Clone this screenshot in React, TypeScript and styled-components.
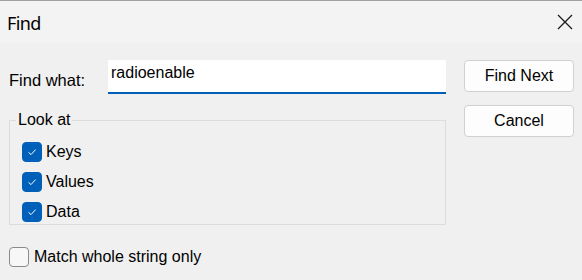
import React, { useState } from 'react';
import styled, { createGlobalStyle } from 'styled-components';

// --------------------------------------------------------------- //
//                       Styled Components                         //
// --------------------------------------------------------------- //

const GlobalStyle = createGlobalStyle`
  html, body {
    margin: 0;
    padding: 0;
    background: #f0f0f0;
  }
  body {
    font-family: "Liberation Sans", Arial, sans-serif;
    color: #000;
  }
`;

const Window = styled.div`
  width: 582px;
  height: 280px;
  background: #f0f0f0;
  overflow: hidden;
`;

const TitleBar = styled.div`
  height: 42px;
  border-top: 1px solid #a0a0a0;
  background: #f3f3f3;
  display: flex;
  align-items: center;
  justify-content: space-between;
  padding-left: 7px;
  padding-right: 9px;
`;

const Title = styled.span`
  font-family: "Noto Sans", "Open Sans", sans-serif;
  font-size: 18px;
  letter-spacing: -0.6px;
  margin-top: 1px;
`;

const CloseButton = styled.button`
  width: 16px;
  height: 16px;
  padding: 0;
  border: none;
  background: none;
  display: flex;
  align-items: center;
  justify-content: center;
  cursor: pointer;
`;

const Body = styled.div`
  display: flex;
  padding: 17px 8px 0 9px;
`;

const LeftColumn = styled.div`
  width: 437px;
  display: flex;
  flex-direction: column;
`;

const RightColumn = styled.div`
  margin-left: 18px;
  width: 111px;
  display: flex;
  flex-direction: column;
  gap: 13px;
`;

const FindRow = styled.div`
  display: flex;
  align-items: center;
`;

const Label = styled.label`
  width: 99px;
  font-size: 16.5px;
  padding-top: 7px;
`;

const TextInput = styled.input`
  box-sizing: border-box;
  width: 338px;
  height: 34px;
  border: none;
  border-bottom: 2px solid #005fb8;
  background: #fff;
  font-family: inherit;
  font-size: 16px;
  color: #000;
  padding: 0 3px 7px;
  outline: none;
`;

const Button = styled.button`
  box-sizing: border-box;
  height: 32px;
  border: 1px solid #d1d1d1;
  border-radius: 4px;
  background: #fdfdfd;
  font-family: inherit;
  font-size: 16px;
  color: #000;
  cursor: pointer;
`;

const GroupBox = styled.fieldset`
  margin: 18px 0 0;
  height: 113px;
  box-sizing: border-box;
  border: 1px solid #dcdcdc;
  padding: 9px 0 0 12px;
  display: flex;
  flex-direction: column;
`;

const Legend = styled.legend`
  font-size: 16px;
  padding: 0 2px;
  margin-left: -6px;
  line-height: 16px;
`;

interface CheckRowProps {
  indent?: boolean
}

const CheckRow = styled.label<CheckRowProps>`
  display: flex;
  align-items: center;
  height: 30px;
  font-size: 16px;
  gap: ${(props) => (props.indent ? '4px' : '5px')};
  cursor: pointer;
`;

interface BoxProps {
  checked: boolean
}

const Box = styled.span<BoxProps>`
  box-sizing: border-box;
  width: 20px;
  height: 20px;
  border-radius: 4px;
  display: flex;
  align-items: center;
  justify-content: center;
  background: ${(props) => (props.checked ? '#005fb8' : '#f7f7f7')};
  border: 1px solid ${(props) => (props.checked ? '#005fb8' : '#8a8a8a')};
`;

const MatchRow = styled.div`
  margin-top: 17px;
`;

// --------------------------------------------------------------- //
//                         Sub Components                          //
// --------------------------------------------------------------- //

interface CheckProps {
  label: string,
  checked: boolean,
  onToggle: () => void
}

const Check = ({ label, checked, onToggle }: CheckProps) => (
  <CheckRow indent onClick={onToggle}>
    <Box checked={checked}>
      {checked && (
        <svg width="12" height="12" viewBox="0 0 12 12">
          <path d="M2.5 6.3 L5 8.6 L9.6 3.6" fill="none" stroke="#fff" strokeWidth="1" />
        </svg>
      )}
    </Box>
    {label}
  </CheckRow>
);

// --------------------------------------------------------------- //
//                         Main Component                          //
// --------------------------------------------------------------- //

export default function App() {
  const [query, setQuery] = useState('radioenable');
  const [lookAt, setLookAt] = useState({ Keys: true, Values: true, Data: true });
  const [wholeString, setWholeString] = useState(false);

  const toggle = (key: keyof typeof lookAt) => {
    setLookAt({ ...lookAt, [key]: !lookAt[key] });
  };

  return (
    <Window>
      <GlobalStyle />
      <TitleBar>
        <Title>Find</Title>
        <CloseButton type="button" aria-label="Close">
          <svg width="16" height="16" viewBox="0 0 16 16">
            <path d="M1 1 L15 15 M15 1 L1 15" stroke="#1a1a1a" strokeWidth="1.3" />
          </svg>
        </CloseButton>
      </TitleBar>
      <Body>
        <LeftColumn>
          <FindRow>
            <Label htmlFor="find-what">Find what:</Label>
            <TextInput
              id="find-what"
              value={query}
              onChange={(e) => setQuery(e.target.value)}
            />
          </FindRow>
          <GroupBox>
            <Legend>Look at</Legend>
            {(Object.keys(lookAt) as (keyof typeof lookAt)[]).map((key) => (
              <Check
                key={key}
                label={key}
                checked={lookAt[key]}
                onToggle={() => toggle(key)}
              />
            ))}
          </GroupBox>
          <MatchRow>
            <CheckRow onClick={() => setWholeString(!wholeString)}>
              <Box checked={wholeString} />
              Match whole string only
            </CheckRow>
          </MatchRow>
        </LeftColumn>
        <RightColumn>
          <Button type="button">Find Next</Button>
          <Button type="button">Cancel</Button>
        </RightColumn>
      </Body>
    </Window>
  );
}
